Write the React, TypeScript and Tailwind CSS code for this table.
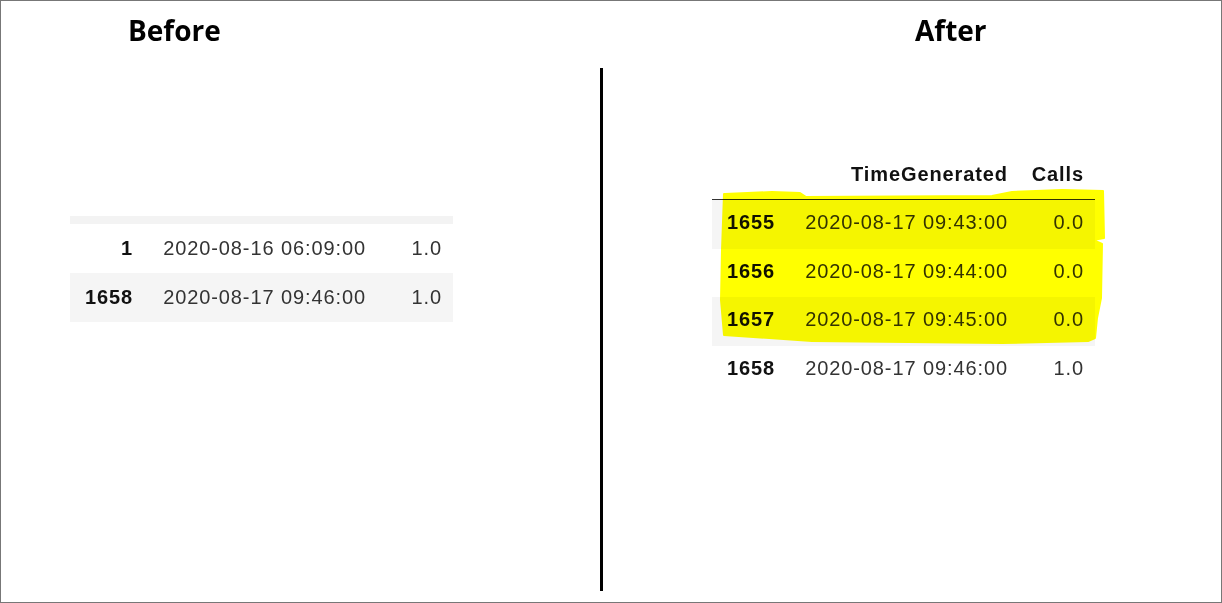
import React from 'react';

const before = [
  { idx: '1', time: '2020-08-16 06:09:00', calls: '1.0' },
  { idx: '1658', time: '2020-08-17 09:46:00', calls: '1.0' },
];

const after = [
  { idx: '1655', time: '2020-08-17 09:43:00', calls: '0.0' },
  { idx: '1656', time: '2020-08-17 09:44:00', calls: '0.0' },
  { idx: '1657', time: '2020-08-17 09:45:00', calls: '0.0' },
  { idx: '1658', time: '2020-08-17 09:46:00', calls: '1.0' },
];

const cell = 'text-right pr-[11px]';

function Row({ r, striped, h }: { r: { idx: string; time: string; calls: string }; striped: boolean; h: string }) {
  return (
    <div className={`grid grid-cols-[74px_233px_76px] ${h} ${striped ? 'bg-[#f5f5f5]' : 'bg-white'}`}>
      <div className={`${cell} font-bold text-[#111]`}>{r.idx}</div>
      <div className={`${cell} text-[#333]`}>{r.time}</div>
      <div className={`${cell} text-[#333]`}>{r.calls}</div>
    </div>
  );
}

export default function App() {
  return (
    <div className="w-[1222px] h-[603px] bg-white border border-[#777] flex overflow-hidden">
      {/* BEFORE */}
      <div className="w-[599px] shrink-0">
        <h1 className="pt-[10px] pl-[127px] text-[28px] leading-[38px] font-bold text-black" style={{ fontFamily: '"Open Sans", "Noto Sans", sans-serif' }}>
          Before
        </h1>
        <div className="mt-[167px] ml-[69px] w-[383px] text-[20px] tracking-[0.9px]" style={{ fontFamily: '"Liberation Sans", Arial, sans-serif' }}>
          <div className="h-[8px] bg-[#f3f3f3]" />
          {before.map((r, i) => (
            <Row key={r.idx} r={r} striped={i % 2 === 1} h="h-[49px] leading-[49px]" />
          ))}
        </div>
      </div>

      {/* DIVIDER */}
      <div className="w-[3px] shrink-0 bg-black mt-[67px] h-[523px]" />

      {/* AFTER */}
      <div className="flex-1">
        <h1 className="pt-[10px] pl-[312px] text-[28px] leading-[38px] font-bold text-black" style={{ fontFamily: '"Open Sans", "Noto Sans", sans-serif' }}>
          After
        </h1>
        <div className="relative mt-[101px] ml-[109px] w-[383px] text-[20px] tracking-[0.9px]" style={{ fontFamily: '"Liberation Sans", Arial, sans-serif' }}>
          <div className="grid grid-cols-[74px_233px_76px] h-[50px] leading-[48px] border-b border-[#333] font-bold text-[#111]">
            <div />
            <div className={cell}>TimeGenerated</div>
            <div className={cell}>Calls</div>
          </div>
          {after.map((r, i) => (
            <Row key={r.idx} r={r} striped={i % 2 === 0} h="h-[48.6px] leading-[45px]" />
          ))}

          {/* marker highlight */}
          <svg className="absolute left-0 top-0 mix-blend-multiply pointer-events-none" width="400" height="210" viewBox="0 0 400 210">
            <path
              d="M13 44 L60 42 L88 43 L94 47 L280 46 L300 42 L350 40 L391 41 L392 88 L381 90 L390 94 L389 148 L385 168 L383 188 L376 191 L290 193 L100 191 L12 185 L9 150 L10 100 L12 44 Z"
              fill="#ffff00"
              stroke="#ffff00"
              strokeWidth="2"
              strokeLinejoin="round"
            />
          </svg>
        </div>
      </div>
    </div>
  );
}
